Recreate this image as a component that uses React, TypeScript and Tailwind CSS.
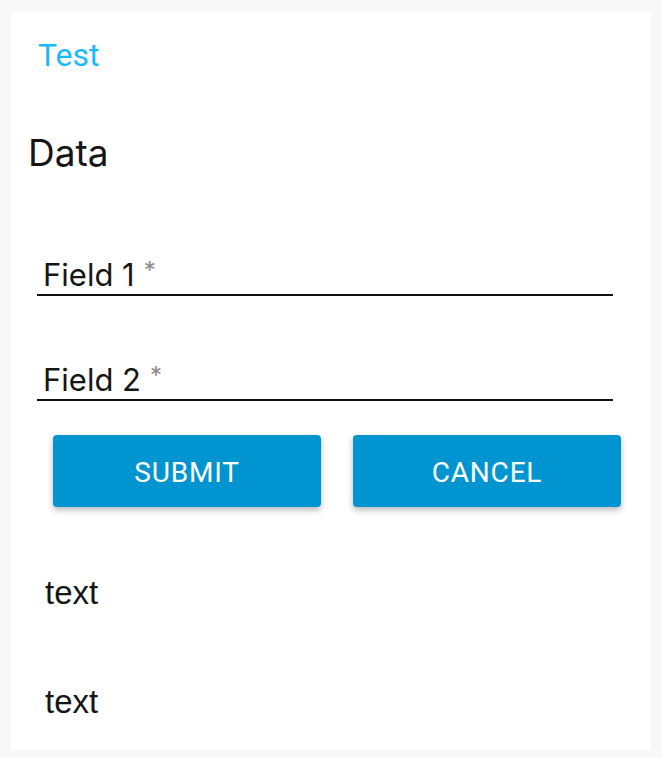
// App.tsx
import React from 'react';

function Field({ label, className }: { label: string; className?: string }) {
  return (
    <div className={`ml-[26px] w-[576px] border-b-2 border-[#111111] pb-[4px] ${className ?? ''}`}>
      <div className="pl-[6px] text-[31px] leading-[31px] text-[#161616] font-['Inter',sans-serif]">
        {label}
        <span className="ml-[9px] align-top text-[24px] leading-[24px] text-[#8a8a8a]">*</span>
      </div>
    </div>
  );
}

function ActionButton({ children }: { children: React.ReactNode }) {
  return (
    <button
      type="button"
      className="flex h-[72px] w-[268px] items-center justify-center rounded-[4px] bg-[#0095d0] pt-[3px] text-[28px] leading-[28px] tracking-[0.8px] text-white uppercase shadow-[0_3px_6px_rgba(0,0,0,0.28)] font-['Roboto',sans-serif]"
    >
      {children}
    </button>
  );
}

export default function App() {
  return (
    <div className="min-h-[758px] bg-[#f8f8f8] pt-[12px]">
      <div className="mx-[11px] h-[738px] w-[640px] bg-white">
        {/* header link */}
        <div className="pt-[27px] pl-[27px] text-[32px] leading-[32px] text-[#1ab9fa] font-['Roboto',sans-serif]">
          Test
        </div>

        <div className="mt-[63px] pl-[17px] text-[37px] leading-[37px] text-[#161616] font-['Inter',sans-serif]">
          Data
        </div>

        {/* form */}
        <Field label="Field 1" className="mt-[88px]" />
        <Field label="Field 2" className="mt-[68px]" />

        <div className="mt-[34px] flex gap-[32px] pl-[42px]">
          <ActionButton>Submit</ActionButton>
          <ActionButton>Cancel</ActionButton>
        </div>

        <div className="mt-[69px] pl-[34px] text-[33px] leading-[33px] text-[#161616] font-['Liberation_Sans',sans-serif]">
          text
        </div>
        <div className="mt-[76px] pl-[34px] text-[33px] leading-[33px] text-[#161616] font-['Liberation_Sans',sans-serif]">
          text
        </div>
      </div>
    </div>
  );
}
